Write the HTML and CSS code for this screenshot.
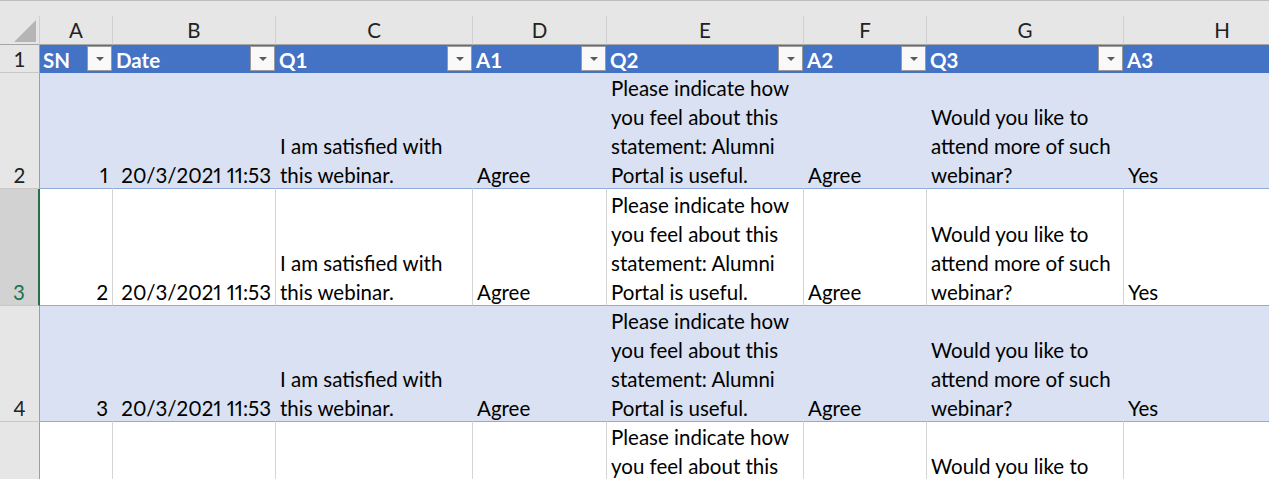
FILE: index.html
```html
<!DOCTYPE html>
<html lang="en">
<head>
    <meta charset="UTF-8">
    <meta name="viewport" content="width=device-width, initial-scale=1.0">
    <title>Webinar Feedback</title>
    <link rel="stylesheet" href="styles.css">
</head>
<body>

    <div class="topbar"></div>

    <div class="sheet">
        <!-- column letters -->
        <div class="corner">
            <svg width="22" height="22" viewBox="0 0 22 22"><polygon points="0,22 22,22 22,0" fill="#b5b5b5"/></svg>
        </div>
        <div class="col-head">A</div>
        <div class="col-head">B</div>
        <div class="col-head">C</div>
        <div class="col-head">D</div>
        <div class="col-head">E</div>
        <div class="col-head">F</div>
        <div class="col-head">G</div>
        <div class="col-head">H</div>

        <!-- table header -->
        <div class="row-head"><span>1</span></div>
        <div class="th"><span>SN</span><button class="filter"><span class="arrow"></span></button></div>
        <div class="th"><span>Date</span><button class="filter"><span class="arrow"></span></button></div>
        <div class="th"><span>Q1</span><button class="filter"><span class="arrow"></span></button></div>
        <div class="th"><span>A1</span><button class="filter"><span class="arrow"></span></button></div>
        <div class="th"><span>Q2</span><button class="filter"><span class="arrow"></span></button></div>
        <div class="th"><span>A2</span><button class="filter"><span class="arrow"></span></button></div>
        <div class="th"><span>Q3</span><button class="filter"><span class="arrow"></span></button></div>
        <div class="th"><span>A3</span></div>

        <!-- row 2 -->
        <div class="row-head"><span>2</span></div>
        <div class="cell band num"><span>1</span></div>
        <div class="cell band num"><span>20/3/2021 11:53</span></div>
        <div class="cell band"><span>I am satisfied with<br>this webinar.</span></div>
        <div class="cell band"><span>Agree</span></div>
        <div class="cell band"><span>Please indicate how<br>you feel about this<br>statement: Alumni<br>Portal is useful.</span></div>
        <div class="cell band"><span>Agree</span></div>
        <div class="cell band"><span>Would you like to<br>attend more of such<br>webinar?</span></div>
        <div class="cell band"><span>Yes</span></div>

        <!-- row 3 -->
        <div class="row-head selected"><span>3</span></div>
        <div class="cell num"><span>2</span></div>
        <div class="cell num"><span>20/3/2021 11:53</span></div>
        <div class="cell"><span>I am satisfied with<br>this webinar.</span></div>
        <div class="cell"><span>Agree</span></div>
        <div class="cell"><span>Please indicate how<br>you feel about this<br>statement: Alumni<br>Portal is useful.</span></div>
        <div class="cell"><span>Agree</span></div>
        <div class="cell"><span>Would you like to<br>attend more of such<br>webinar?</span></div>
        <div class="cell"><span>Yes</span></div>

        <!-- row 4 -->
        <div class="row-head"><span>4</span></div>
        <div class="cell band num"><span>3</span></div>
        <div class="cell band num"><span>20/3/2021 11:53</span></div>
        <div class="cell band"><span>I am satisfied with<br>this webinar.</span></div>
        <div class="cell band"><span>Agree</span></div>
        <div class="cell band"><span>Please indicate how<br>you feel about this<br>statement: Alumni<br>Portal is useful.</span></div>
        <div class="cell band"><span>Agree</span></div>
        <div class="cell band"><span>Would you like to<br>attend more of such<br>webinar?</span></div>
        <div class="cell band"><span>Yes</span></div>

        <!-- row 5 -->
        <div class="row-head"><span>5</span></div>
        <div class="cell num"><span>4</span></div>
        <div class="cell num"><span>20/3/2021 11:53</span></div>
        <div class="cell"><span>I am satisfied with<br>this webinar.</span></div>
        <div class="cell"><span>Agree</span></div>
        <div class="cell"><span>Please indicate how<br>you feel about this<br>statement: Alumni<br>Portal is useful.</span></div>
        <div class="cell"><span>Agree</span></div>
        <div class="cell"><span>Would you like to<br>attend more of such<br>webinar?</span></div>
        <div class="cell"><span>Yes</span></div>
    </div>

</body>
</html>
```

FILE: styles.css
```css
body {
    margin: 0;
    background: white;
    font-family: Lato, "Liberation Sans", sans-serif;
    font-size: 20.5px;
    color: black;
    overflow: hidden;
}

.topbar {
    height: 15px;
    background: #e6e6e6;
    border-top: 1px solid #bdbdbd;
}

.sheet {
    display: grid;
    grid-template-columns: 40px 73px 163px 197px 134px 197px 123px 197px 197px;
    grid-template-rows: 29px 28px 116px 117px 116px 116px;
}

.sheet > div {
    box-sizing: border-box;
}

.corner {
    background: #e6e6e6;
    border-right: 1px solid #d0d0d0;
    border-bottom: 1px solid #a6a6a6;
    display: flex;
    justify-content: flex-end;
    align-items: flex-end;
    padding: 0 3px 2px 0;
}

.corner svg {
    display: block;
}

.col-head {
    background: #e6e6e6;
    border-right: 1px solid #d0d0d0;
    border-bottom: 1px solid #a6a6a6;
    text-align: center;
    line-height: 28px;
    color: #222;
}

.row-head {
    background: #e6e6e6;
    border-right: 1px solid #9e9e9e;
    border-bottom: 1px solid #c8c8c8;
    display: flex;
    justify-content: center;
    align-items: flex-end;
    line-height: 29px;
    color: #222;
}

.row-head span,
.cell span {
    margin-bottom: -2px;
}

.row-head.selected {
    background: #d2d2d2;
    color: #217346;
    border-right: 2px solid #217346;
}

.th {
    background: #4472c4;
    color: white;
    font-weight: bold;
    display: flex;
    justify-content: space-between;
    align-items: center;
    padding: 1px 1px 0 3px;
    line-height: 28px;
}

.filter {
    width: 25px;
    height: 25px;
    margin-bottom: 2px;
    padding: 0;
    border: 1px solid #9a9a9a;
    background: #f9f9f9;
    display: flex;
    justify-content: center;
    align-items: center;
}

.arrow {
    width: 0;
    height: 0;
    border-left: 4px solid transparent;
    border-right: 4px solid transparent;
    border-top: 4px solid #5a5a5a;
}

.cell {
    display: flex;
    align-items: flex-end;
    padding: 0 4px;
    line-height: 29px;
    white-space: nowrap;
    border-right: 1px solid #d4d4d4;
    border-bottom: 1px solid #8ea9db;
}

.cell.num {
    justify-content: flex-end;
    font-variant-numeric: proportional-nums;
}

.cell.band {
    background: #d9e1f2;
    border-right-color: #d9e1f2;
}
```
